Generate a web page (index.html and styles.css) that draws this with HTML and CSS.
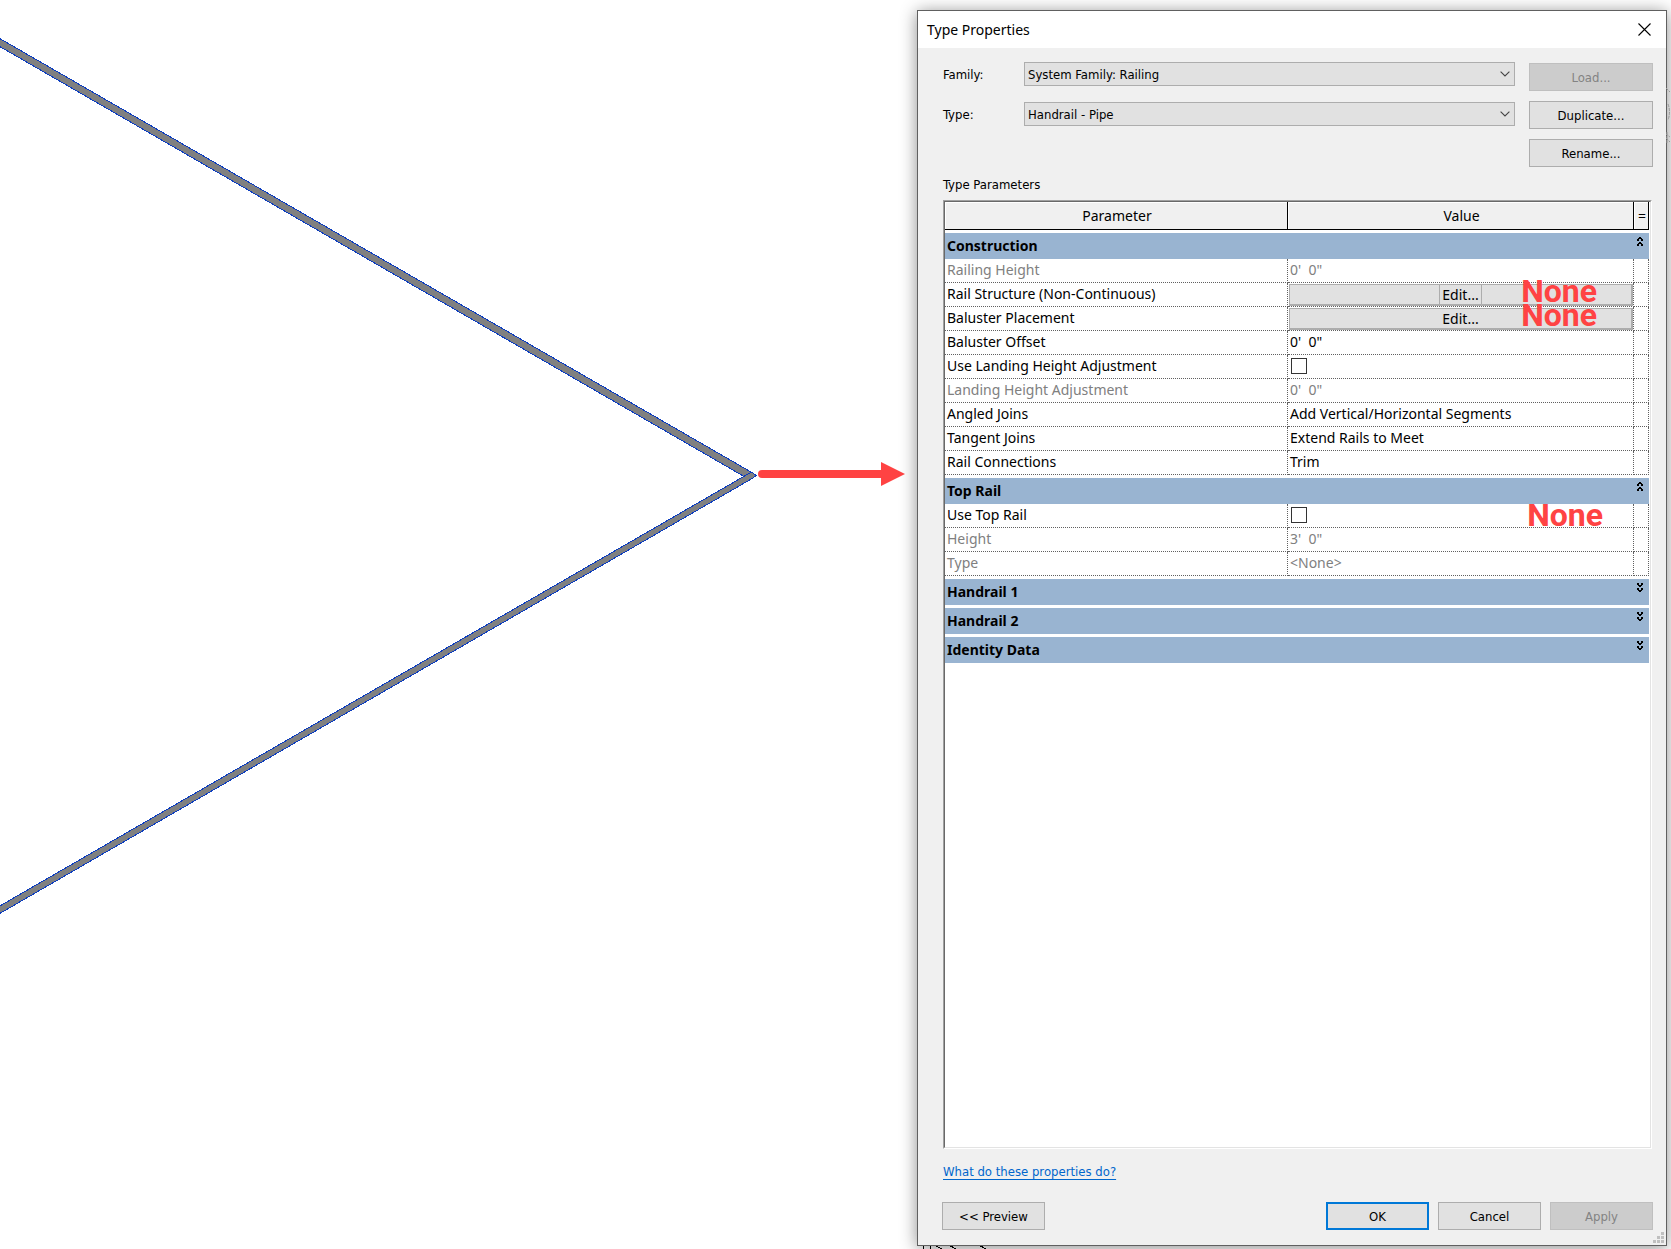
FILE: index.html
```
<!DOCTYPE html>
<html lang="en">
<head>
<meta charset="utf-8">
<title>Type Properties</title>
<link rel="stylesheet" href="styles.css">
</head>
<body>
<svg class="symbols" aria-hidden="true">
  <symbol id="chevron-down" viewBox="0 0 10 6"><path d="M.6.6 5 5 9.4.6" fill="none" stroke="#444" stroke-width="1.1"/></symbol>
  <symbol id="collapse" viewBox="0 0 6 9"><path d="M2 0h2v1h1v1h1v2H4V2H2v2H0V2h1V1h1zM2 5h2v1h1v1h1v2H4V7H2v2H0V7h1V6h1z"/></symbol>
  <symbol id="expand" viewBox="0 0 6 9"><path d="M0 0h2v2h2V0h2v2H5v1H4v1H2V3H1V2H0zM0 5h2v2h2V5h2v2H5v1H4v1H2V8H1V7H0z"/></symbol>
</svg>

<main class="workspace">
  <section class="canvas" aria-label="Railing plan">
    <svg class="drawing" aria-hidden="true">
      <g class="rail">
        <path d="M-2 37.500 751 472 756 475 745 477 -2 45.500z"/>
        <path d="M-2 907 748 474 752 472 756 475.500 753 478 -2 914.500z"/>
      </g>
      <path d="M762 474H882" stroke="#ff4343" stroke-width="8" stroke-linecap="round"/>
      <path d="M881 462 905 474 881 486z" fill="#ff4343"/>
      <path class="stray" d="M923.5 1240v9M930.5 1240v9M932 1244l10 5M947 1244l9 5M977 1244l9 5"/>
    </svg>
  </section>

  <section class="dialog" role="dialog" aria-labelledby="dialog-title">
    <header class="titlebar">
      <h1 id="dialog-title">Type Properties</h1>
      <button class="close" type="button" aria-label="Close">
        <svg width="13" height="13" viewBox="0 0 13 13"><path d="M.5.5l12 12M12.5.5l-12 12" stroke="#000" stroke-width="1.1"/></svg>
      </button>
    </header>

    <form class="content">
      <div class="selection">
        <div class="fields">
          <div class="field">
            <label for="family">Family:</label>
            <span class="combo">
              <select id="family"><option>System Family: Railing</option></select>
              <svg width="10" height="6"><use href="#chevron-down"/></svg>
            </span>
          </div>
          <div class="field">
            <label for="type">Type:</label>
            <span class="combo">
              <select id="type"><option>Handrail - Pipe</option></select>
              <svg width="10" height="6"><use href="#chevron-down"/></svg>
            </span>
          </div>
        </div>
        <div class="actions">
          <button class="btn" type="button" disabled>Load...</button>
          <button class="btn" type="button">Duplicate...</button>
          <button class="btn" type="button">Rename...</button>
        </div>
      </div>

      <h2 id="params-title">Type Parameters</h2>
      <div class="sheet">
        <div class="sheet-inner">
          <table aria-labelledby="params-title">
            <colgroup><col class="col-name"><col><col class="col-link"></colgroup>
            <thead>
              <tr><th scope="col">Parameter</th><th scope="col">Value</th><th scope="col">=</th></tr>
            </thead>
            <tbody>
              <tr class="group"><th colspan="3" scope="rowgroup"><div>Construction<button type="button" aria-label="Collapse Construction"><svg width="6" height="9"><use href="#collapse"/></svg></button></div></th></tr>
              <tr class="off"><td>Railing Height</td><td class="len">0'  0"</td><td></td></tr>
              <tr><td>Rail Structure (Non-Continuous)</td><td class="edit"><button type="button"><span class="focus">Edit...</span></button><strong class="note">None</strong></td><td></td></tr>
              <tr><td>Baluster Placement</td><td class="edit"><button type="button"><span>Edit...</span></button><strong class="note">None</strong></td><td></td></tr>
              <tr><td>Baluster Offset</td><td class="len">0'  0"</td><td></td></tr>
              <tr><td><label for="landing">Use Landing Height Adjustment</label></td><td><input type="checkbox" id="landing"></td><td></td></tr>
              <tr class="off"><td>Landing Height Adjustment</td><td class="len">0'  0"</td><td></td></tr>
              <tr><td>Angled Joins</td><td>Add Vertical/Horizontal Segments</td><td></td></tr>
              <tr><td>Tangent Joins</td><td>Extend Rails to Meet</td><td></td></tr>
              <tr><td>Rail Connections</td><td>Trim</td><td></td></tr>
            </tbody>
            <tbody>
              <tr class="group"><th colspan="3" scope="rowgroup"><div>Top Rail<button type="button" aria-label="Collapse Top Rail"><svg width="6" height="9"><use href="#collapse"/></svg></button></div></th></tr>
              <tr><td><label for="toprail">Use Top Rail</label></td><td class="check"><input type="checkbox" id="toprail"><strong class="note">None</strong></td><td></td></tr>
              <tr class="off"><td>Height</td><td class="len">3'  0"</td><td></td></tr>
              <tr class="off"><td>Type</td><td>&lt;None&gt;</td><td></td></tr>
            </tbody>
            <tbody>
              <tr class="group"><th colspan="3" scope="rowgroup"><div>Handrail 1<button type="button" aria-label="Expand Handrail 1"><svg width="6" height="9"><use href="#expand"/></svg></button></div></th></tr>
              <tr class="group"><th colspan="3" scope="rowgroup"><div>Handrail 2<button type="button" aria-label="Expand Handrail 2"><svg width="6" height="9"><use href="#expand"/></svg></button></div></th></tr>
              <tr class="group"><th colspan="3" scope="rowgroup"><div>Identity Data<button type="button" aria-label="Expand Identity Data"><svg width="6" height="9"><use href="#expand"/></svg></button></div></th></tr>
            </tbody>
          </table>
        </div>
      </div>

      <p class="help"><a href="#help">What do these properties do?</a></p>

      <footer class="footer">
        <button class="btn preview" type="button">&lt;&lt; Preview</button>
        <button class="btn default" type="submit">OK</button>
        <button class="btn" type="button">Cancel</button>
        <button class="btn" type="button" disabled>Apply</button>
      </footer>
    </form>
    <svg class="grip" width="11" height="11" aria-hidden="true"><path d="M8 0h3v3H8zM4 4h3v3H4zM8 4h3v3H8zM0 8h3v3H0zM4 8h3v3H4zM8 8h3v3H8z" fill="#bfbfbf"/></svg>
  </section>

  <svg class="edge" width="5" height="70" aria-hidden="true"><path d="M0 6l4 4M2 22q3 8 0 16M0 52l4 3M0 56l4 4M1 50v12" fill="none" stroke="#999" stroke-dasharray="3 1"/></svg>
</main>
</body>
</html>
```

FILE: styles.css
```
* { box-sizing: border-box; }

body {
  margin: 0;
  background: #fff;
  color: #000;
  font: 13px/18px "DejaVu Sans Condensed", "DejaVu Sans", sans-serif;
}

button, select, input { font: inherit; color: inherit; margin: 0; }

h1, h2, p { margin: 0; font-size: inherit; font-weight: 400; }

.symbols { display: none; }

.workspace {
  position: relative;
  display: flex;
  min-height: 100vh;
  padding: 10px 4px 3px 0;
  overflow: hidden;
}

/* Plan view behind the dialog */
.canvas { flex: 1; min-width: 0; }

.drawing {
  position: absolute;
  inset: 0;
  width: 100%;
  height: 100%;
}

.rail {
  fill: #808080;
  stroke: #0a3cc0;
  stroke-width: 1;
  shape-rendering: crispEdges;
}

.stray { stroke: #000; shape-rendering: crispEdges; }

.edge { position: absolute; top: 82px; right: 0; }

/* Dialog window */
.dialog {
  position: relative;
  flex: 0 0 750px;
  display: flex;
  flex-direction: column;
  border: 1px solid #606060;
  background: #f0f0f0;
  box-shadow: 0 2px 16px rgba(0, 0, 0, .45);
}

.titlebar {
  display: flex;
  align-items: center;
  justify-content: space-between;
  height: 37px;
  padding: 0 10px 0 9px;
  background: #fff;
}

.titlebar h1, table { font: 14px/20px "Noto Sans", "Open Sans", sans-serif; }

.close {
  display: flex;
  padding: 5px;
  border: 0;
  background: none;
}

.content {
  flex: 1;
  display: flex;
  flex-direction: column;
  padding: 14px 13px 15px 24px;
}

.selection { display: flex; gap: 14px; }

.fields {
  flex: 1;
  display: flex;
  flex-direction: column;
  gap: 16px;
}

.field { display: flex; align-items: center; }

.field label { width: 82px; padding: 2px 0 0 1px; }

.combo { flex: 1; display: grid; align-items: center; }

.combo select, .combo svg { grid-area: 1 / 1; }

.combo select {
  appearance: none;
  height: 24px;
  padding: 2px 24px 0 3px;
  border: 1px solid #adadad;
  border-radius: 0;
  background: #e1e1e1;
}

.combo svg { justify-self: end; margin-right: 5px; pointer-events: none; }

.actions {
  flex: 0 0 124px;
  display: flex;
  flex-direction: column;
  gap: 10px;
  padding-top: 1px;
}

.btn {
  height: 28px;
  padding: 2px 0 0;
  border: 1px solid #adadad;
  border-radius: 0;
  background: #e1e1e1;
}

.btn:disabled { border-color: #bfbfbf; background: #ccc; color: #838383; }

.btn.default { border: 2px solid #0078d7; }

h2 { margin: 9px 1px 6px; }

/* Sunken parameter sheet */
.sheet {
  flex: 1;
  display: flex;
  margin: 0 1px;
  border: 1px solid;
  border-color: #a0a0a0 #fff #fff #a0a0a0;
}

.sheet-inner {
  flex: 1;
  padding-right: 1px;
  border: 1px solid;
  border-color: #696969 #e3e3e3 #e3e3e3 #696969;
  background: #fff;
}

table {
  width: 100%;
  table-layout: fixed;
  border-collapse: separate;
  border-spacing: 0;
}

.col-name { width: 343px; }
.col-link { width: 15px; }

th, td { padding: 0; }

thead th {
  height: 28px;
  padding-left: 2px;
  border-right: 1px solid #000;
  border-bottom: 1px solid #000;
  background: #f0f0f0;
  box-shadow: inset 1px 1px #fff;
  font-weight: 400;
}

.group th { border-top: 3px solid #fff; text-align: left; }

.group div {
  display: flex;
  justify-content: space-between;
  align-items: flex-start;
  height: 26px;
  padding: 0 6px 0 2px;
  background: #99b4d1;
  line-height: 26px;
}

.group button {
  display: flex;
  padding: 4px 0;
  border: 0;
  background: none;
}

.group svg { shape-rendering: crispEdges; }

td {
  position: relative;
  height: 24px;
  padding: 0 2px 2px;
  border-right: 1px dotted #606060;
  border-bottom: 1px dotted #606060;
  line-height: 20px;
  white-space: nowrap;
}

.off { color: #808080; }

.len { white-space: pre; }

td input {
  appearance: none;
  display: block;
  width: 16px;
  height: 16px;
  margin-left: 1px;
  border: 1px solid #333;
  background: #fff;
}

.edit { padding-bottom: 0; }

.edit button {
  display: flex;
  justify-content: center;
  width: calc(100% + 3px);
  height: 22px;
  margin: 1px -1px 0;
  padding: 0;
  border: 1px solid #adadad;
  border-width: 1px 2px 2px 1px;
  border-radius: 0;
  background: #e1e1e1;
  line-height: 19px;
}

.edit span { padding: 0 2px; border: 0 solid #adadad; }

.edit .focus { border-width: 0 1px; }

/* Review marks laid over the sheet */
.note {
  position: absolute;
  top: -4px;
  right: 36px;
  color: #ff4343;
  font: 700 32px/24px Roboto, sans-serif;
  z-index: 1;
  pointer-events: none;
}

.check .note { top: -1px; right: 30px; }

.help { margin: 14px 1px 21px; }

.help a { color: #0066cc; text-underline-offset: 3px; }

.footer { display: flex; gap: 9px; }

.footer .btn { width: 103px; }

.preview { margin-right: auto; }

.grip { position: absolute; right: 2px; bottom: 2px; }
```
